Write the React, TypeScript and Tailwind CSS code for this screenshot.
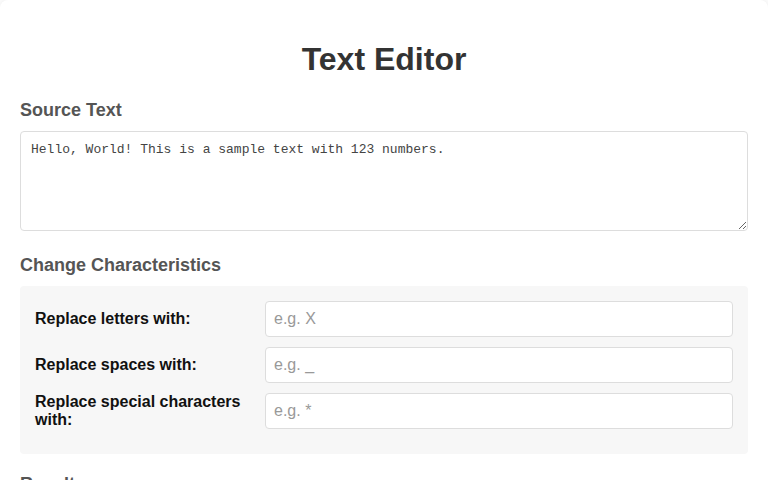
import { useState } from 'react';

const fields = [
  { key: 'letters', label: 'Replace letters with:', placeholder: 'e.g. X' },
  { key: 'spaces', label: 'Replace spaces with:', placeholder: 'e.g. _' },
  { key: 'special', label: 'Replace special characters with:', placeholder: 'e.g. *' },
];

export default function App() {
  const [source, setSource] = useState('Hello, World! This is a sample text with 123 numbers.');
  const [values, setValues] = useState<Record<string, string>>({ letters: '', spaces: '', special: '' });

  const result = source
    .split('')
    .map((ch) => {
      if (/[a-zA-Z]/.test(ch)) return values.letters || ch;
      if (ch === ' ') return values.spaces || ch;
      if (/[^a-zA-Z0-9\s]/.test(ch)) return values.special || ch;
      return ch;
    })
    .join('');

  return (
    <div className="min-h-screen bg-white font-['Liberation_Sans',Arial,sans-serif] leading-[normal]">
      <div className="mx-auto max-w-[800px] rounded-lg bg-white p-5 shadow-[0_0_10px_rgba(0,0,0,0.1)]">
        <h1 className="mt-[21.44px] mb-[21.44px] text-center text-[32px] font-bold leading-[normal] text-[#333]">
          Text Editor
        </h1>

        {/* Source */}
        <h2 className="mb-[11px] text-[18px] font-bold leading-[20px] text-[#555]">Source Text</h2>
        <textarea
          value={source}
          onChange={(e) => setSource(e.target.value)}
          className="block h-[100px] w-full rounded border border-[#ddd] p-[10px] font-['Liberation_Mono','Courier_New',monospace] text-[13px] leading-[normal] text-[#444] outline-none"
        />

        {/* Options */}
        <h2 className="mt-6 mb-[11px] text-[18px] font-bold leading-[20px] text-[#555]">Change Characteristics</h2>
        <div className="mb-5 rounded bg-[#f7f7f7] p-[15px]">
          {fields.map((f) => (
            <div key={f.key} className="mb-[10px] flex items-center gap-[10px]">
              <label className="w-[220px] shrink-0 text-[16px] font-bold leading-[normal] text-[#111]">{f.label}</label>
              <input
                value={values[f.key]}
                onChange={(e) => setValues({ ...values, [f.key]: e.target.value })}
                placeholder={f.placeholder}
                className="h-9 flex-1 rounded border border-[#ddd] bg-white px-2 text-[16px] text-[#333] outline-none placeholder:text-[#999]"
              />
            </div>
          ))}
        </div>

        {/* Output */}
        <h2 className="mb-[11px] text-[18px] font-bold leading-[20px] text-[#555]">Results</h2>
        <div className="min-h-[100px] rounded border border-[#ddd] bg-[#fafafa] p-[10px] font-['Liberation_Mono','Courier_New',monospace] text-[13px] text-[#333] whitespace-pre-wrap">
          {result}
        </div>
      </div>
    </div>
  );
}
